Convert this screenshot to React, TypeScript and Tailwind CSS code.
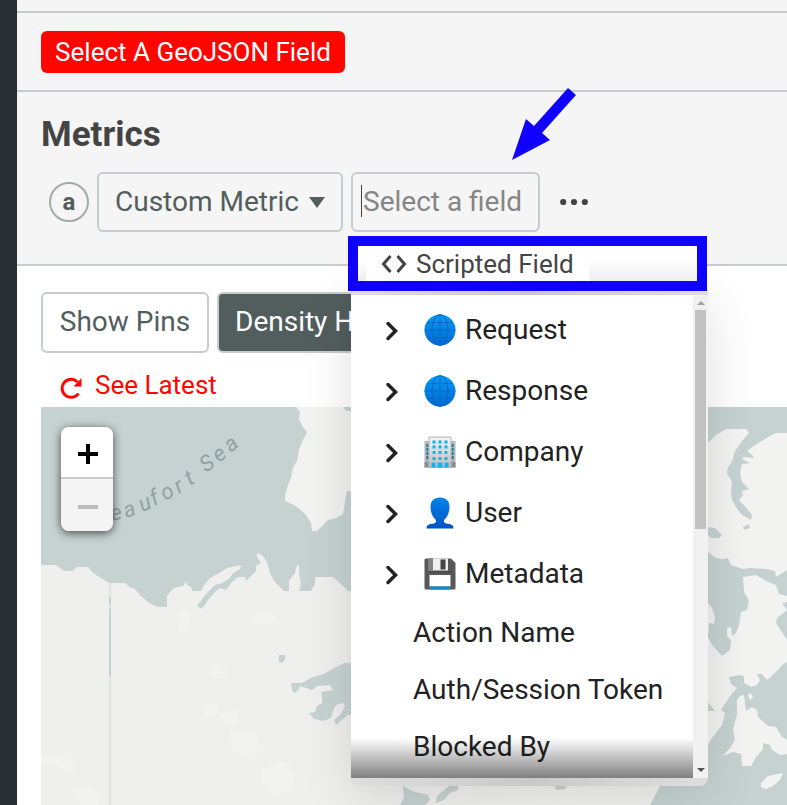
import type { ReactNode } from "react";

function Globe() {
  return (
    <svg viewBox="0 0 32 32" className="size-8 shrink-0" aria-hidden="true">
      <defs>
        <linearGradient id="globe" x1="0" y1="0" x2="0" y2="1">
          <stop offset="0" stopColor="#039df5" />
          <stop offset="1" stopColor="#0068d6" />
        </linearGradient>
      </defs>
      <circle cx="16" cy="16" r="15.5" fill="url(#globe)" />
      <g fill="none" stroke="#0668c0" strokeWidth="1">
        <path d="M16 .5v31M.5 16h31M3.500 8.500h25M3.500 23.500h25" />
        <ellipse cx="16" cy="16" rx="8" ry="15.500" />
      </g>
    </svg>
  );
}

function Building() {
  const rows = [4.5, 9.5, 15, 21];
  return (
    <svg viewBox="0 0 32 32" className="size-8 shrink-0" aria-hidden="true">
      <defs>
        <linearGradient id="tower" x1="0" y1="0" x2="0" y2="1">
          <stop offset="0" stopColor="#f4f4f4" />
          <stop offset="1" stopColor="#bdbdbd" />
        </linearGradient>
      </defs>
      <path d="M.500 5h5v26.500h-5zM26.500 5h5v26.500h-5z" fill="#b5b5b5" />
      <path d="M.500 26h5v5.500h-5zM26.500 26h5v5.500h-5z" fill="#8f8f8f" />
      {[8, 12, 16, 20].map((y) => (
        <path key={y} d={`M2.500 ${y}h2v3h-2zM27.500 ${y}h2v3h-2z`} fill="#087da5" />
      ))}
      <path d="M5 1h22v30.500H5z" fill="url(#tower)" stroke="#b5b5b5" />
      {rows.map((y) => (
        <path key={y} d={`M8.500 ${y}h3v3h-3zM14.500 ${y}h3v3h-3zM20.500 ${y}h3v3h-3z`} fill="#08b5f7" />
      ))}
      <path d="M7.500 26.500h4v5h-4zM13.500 26.500h5v5h-5zM20.500 26.500h4v5h-4z" fill="#08b5f7" />
    </svg>
  );
}

function Person() {
  return (
    <svg viewBox="0 0 32 32" className="size-8 shrink-0" aria-hidden="true">
      <defs>
        <linearGradient id="person" x1="0" y1="0" x2="0" y2="1">
          <stop offset="0" stopColor="#0284ea" />
          <stop offset="1" stopColor="#0052c4" />
        </linearGradient>
      </defs>
      <path
        d="M16 .5c6 0 9.500 3.500 9.500 9 0 6-2 10.500-5.500 13.500v2c1 1.500 3 1.500 5.500 2 3 .7 4 2 4 4.500h-27c0-2.500 1-3.800 4-4.500 2.500-.5 4.500-.5 5.500-2v-2c-3.500-3-5.500-7.500-5.500-13.500 0-5.500 3.500-9 9.500-9z"
        fill="url(#person)"
      />
    </svg>
  );
}

function Floppy() {
  return (
    <svg viewBox="0 0 32 32" className="size-8 shrink-0" aria-hidden="true">
      <path d="M2 .5h25l4.500 4.500v25a1.500 1.500 0 0 1-1.500 1.500H2A1.500 1.500 0 0 1 .5 30V2A1.500 1.500 0 0 1 2 .5z" fill="#585858" />
      <path d="M4 .5h5v13H4z" fill="#828282" />
      <path d="M9 .5h15v12H9z" fill="#eeeeee" />
      <path d="M16.500 1.500h5v10h-5z" fill="#444" />
      <path d="M3.500 14h25" stroke="#3f3f3f" />
      <path d="M5.500 17h21v11.500h-21z" fill="#fff" />
      <path d="M5.500 28.500h21v3h-21z" fill="#0888cf" />
    </svg>
  );
}

function Chevron() {
  return (
    <svg viewBox="0 0 14 20" className="mt-[3px] h-5 w-[14px] shrink-0" fill="none" stroke="#222" strokeWidth="3.500" aria-hidden="true">
      <path d="m3 2.500 7.500 7.500-7.500 7.500" strokeLinecap="round" />
    </svg>
  );
}

const groups: { name: string; icon: ReactNode }[] = [
  { name: "Request", icon: <Globe /> },
  { name: "Response", icon: <Globe /> },
  { name: "Company", icon: <Building /> },
  { name: "User", icon: <Person /> },
  { name: "Metadata", icon: <Floppy /> },
];

const fields = ["Action Name", "Auth/Session Token", "Blocked By"];

function FieldMenu() {
  return (
    <div className="absolute top-full left-0 z-10 mt-1 w-[357px]">
      <div className="relative -ml-[3px] h-[55px] w-[359px] border-[10px] border-[#1000ff] bg-linear-to-b from-white from-40% to-[#eeeeee]">
        <button className="ml-2 flex h-full w-[223px] items-center gap-[9px] bg-white pl-[15px] text-[26px] leading-8 text-[#444]">
          <svg viewBox="0 0 26 20" className="h-5 w-[26px]" fill="none" stroke="#444" strokeWidth="3" aria-hidden="true">
            <path d="m9.500 2-7 8 7 8M16.500 2l7 8-7 8" />
          </svg>
          <span className="whitespace-nowrap">Scripted Field</span>
        </button>
      </div>
      <div className="rounded-b-lg bg-linear-to-r from-[#dedede] via-[#c9c9c9] to-[#dedede] pt-1 pb-2 shadow-[0_10px_50px_rgba(0,0,0,0.13)]">
        <div className="flex h-[483px] bg-white">
          <div className="relative min-w-0 flex-1 overflow-hidden pt-1">
            <ul className="text-[28px] leading-8 text-[#222]">
              {groups.map((group) => (
                <li key={group.name}>
                  <button className="flex h-[61px] w-full items-center pl-[34px]">
                    <Chevron />
                    <span className="ml-[25px] flex items-center gap-[9px]">
                      {group.icon}
                      {group.name}
                    </span>
                  </button>
                </li>
              ))}
              {fields.map((field) => (
                <li key={field}>
                  <button className="flex h-[57px] w-full items-center pl-[62px] whitespace-nowrap">{field}</button>
                </li>
              ))}
            </ul>
            <div className="pointer-events-none absolute inset-x-0 bottom-0 h-10 bg-linear-to-b from-transparent to-black/50" />
          </div>
          <div className="flex w-[15px] flex-col items-center bg-[#f1f1f1] py-[6px]">
            <svg viewBox="0 0 8 4" className="h-1 w-2" aria-hidden="true">
              <path d="M0 4 4 0l4 4z" fill="#a0a0a0" />
            </svg>
            <div className="mt-[5px] h-[219px] w-[11px] bg-[#c1c1c1]" />
            <svg viewBox="0 0 8 4" className="mt-auto h-1 w-2" aria-hidden="true">
              <path d="m0 0 4 4 4-4z" fill="#505050" />
            </svg>
          </div>
        </div>
      </div>
    </div>
  );
}

const mainland =
  "M41 565H56L64 571H72L77 567H88L93 573 101 578 109 583H125L131 588H134L141 596 148 602 157 607H167V596L171 591 174 588 183 586 186 581 187 585 191 587 192 591H201L205 584 210 578 221 572 227 568 241 565 240 569 233 573 230 578 222 583 215 585 209 591 203 598 201 601 197 605 201 609 205 605 207 601 215 592 220 588 226 590 232 582 238 577 245 577 246 581 256 571V566L261 563 257 557V553L262 555 267 562 270 573 274 581 284 591H289V581L295 573 297 565 299 566V574L301 583 299 591H311L315 584V577H333L341 584 348 591H360L700 600 708 603 712 608 715 617 714 624 709 623 708 637 712 645 722 656 730 650 731 640 727 636 727 628 731 627 732 636 736 633 739 625 741 612 747 610 749 600 744 592 743 577 756 575 768 582 776 585 779 594 787 596V602L782 603 787 610 777 618 776 623 787 640V662L783 664 776 672 767 680 762 674H757L760 680 757 685 751 687 744 683V676L740 675 729 677 731 684 737 688 730 696 721 710 725 713 722 725 712 738 708 745 660 786 650 805H41Z";

const northIsland =
  "M296 407 300 412 299 420 303 427 307 432 302 442 299 450 297 461 293 468 291 478 287 488 285 497V501L292 504 300 509 306 515 311 523 312 531H317L323 525 328 520 336 518 343 514 345 502 347 491H360V411H346L343 407Z";

const eastIsland =
  "M708 443 716 435 726 429H746L749 433 742 441 735 451 732 462 728 467 727 473 732 482 731 490 732 500 736 507 741 514 751 520 752 515 749 511 739 500 743 495 742 491 749 489 742 482 740 473 742 464 750 463 742 459 744 457 754 458 752 455 747 451 752 447 760 442 770 436 776 433H787V570L776 577 775 571 767 569 750 568 743 569 731 565 728 558 722 559 716 558 708 552Z";

const southPeninsula =
  "M740 696 744 695 746 711 752 707 757 710 758 717 768 726 776 727 782 737 787 740V754L780 755 772 750 770 745 763 743V749L756 757 751 766H742L741 754 733 752 723 756 730 748 735 740 733 729 737 715V700Z M761 783 768 776 783 773 780 780 773 786 766 789 761 787Z M748 695 751 693 753 698 750 700Z";

const lakes =
  "M279 655H285V660L282 663 279 662Z M291 683H302L313 677 324 674 334 668 344 663H360V715H348L342 720 336 725 334 720 341 714 345 706 343 703 336 705 333 711 331 718 323 721 314 719 309 713 315 712 317 706 322 703V697L321 692 333 690 330 685 317 686 312 690 300 686 299 689 295 693 292 690Z M400 805 404 798 403 786 412 791 428 795 430 800 425 805Z M437 796 449 786H458V790L450 793 444 800 436 803Z M555 786H567L565 789 556 790Z M708 527 715 528 722 535 719 538H711L708 535Z M743 527 749 524 750 528 744 530Z M708 702 715 711H708Z M723 567 728 566 729 569H723Z M757 685 762 688 767 696 765 700 759 693 754 688Z";

const relief =
  "M180 612 188 615 190 622 184 633H179Z M208 667 218 664 227 671 222 679 209 677Z M253 615 270 612 279 620 267 625 250 622Z M231 731H255L258 748 252 754 232 752Z M204 706 214 703 219 714 236 710 237 720 228 726 220 715 207 718Z M41 752 50 758 68 757 75 769 67 772 55 765 41 763Z M71 787 90 788 100 797 98 805H81Z M262 770 284 760 295 773 290 790 274 794 263 785Z";

const labelX = "93 112 126 142 154 165 179 190 198 206 219 231";
const labelY = "526 521 518 512 506 501 494 486 478 473 463 453";
const labelTurn = "-10 -12 -18 -22 -25 -28 -30 -31 -34 -36 -38 -40";

function Map() {
  return (
    <div className="relative ml-6 flex-1 bg-[#c6d2d2]">
      <svg viewBox="41 407 746 398" className="block w-full" role="img" aria-label="Map">
        <defs>
          <linearGradient id="land" gradientUnits="userSpaceOnUse" x1="300" y1="0" x2="740" y2="0">
            <stop offset="0" stopColor="#efefee" />
            <stop offset="1" stopColor="#f3f3f2" />
          </linearGradient>
        </defs>
        <path d={mainland} fill="url(#land)" />
        <path d={northIsland} fill="#f2f2f0" />
        <path d={eastIsland} fill="#f3f3f2" />
        <path d={southPeninsula} fill="#f3f3f2" />
        <path d={relief} fill="#f2f2f0" />
        <path d={lakes} fill="#c6d2d2" />
        <path d="M110 583V805" stroke="#e2e4e3" strokeWidth="2" />
        <path d="M110 609V676M110 597v8" stroke="#c6d2d2" strokeWidth="2" />
        <text x={labelX} y={labelY} rotate={labelTurn} fill="#8fa1a0" className="text-[22px] italic">
          Beaufort Sea
        </text>
      </svg>
      <div className="absolute top-5 left-5 flex w-[52px] flex-col overflow-hidden rounded-lg shadow-[0_2px_10px_rgba(0,0,0,0.65)]">
        <button aria-label="Zoom in" className="flex h-[52px] items-center justify-center border-b-2 border-[#ccc] bg-white pt-1 pl-px">
          <svg viewBox="0 0 20 20" className="size-5" stroke="#000" strokeWidth="4" aria-hidden="true">
            <path d="M0 10h20M10 0v20" />
          </svg>
        </button>
        <button aria-label="Zoom out" className="flex h-[52px] items-center justify-center bg-[#f4f4f4] pt-1 pl-px">
          <svg viewBox="0 0 20 20" className="size-5" stroke="#bbb" strokeWidth="4" aria-hidden="true">
            <path d="M0 10h20" />
          </svg>
        </button>
      </div>
    </div>
  );
}

export default function App() {
  return (
    <div className="flex min-h-screen overflow-hidden bg-white font-[Roboto,sans-serif]">
      <aside className="w-[17px] shrink-0 bg-[#272e34]" />
      <main className="flex min-w-0 flex-1 flex-col">
        <div className="h-[13px] border-b-2 border-[#c5cccd] bg-[#f5f5f5]" />
        <section className="border-b-2 border-[#c5cccd] bg-[#f5f5f5] px-6 pt-[18px] pb-[17px]">
          <button className="block h-[42px] w-[304px] rounded-md bg-[#ff0500] text-[26px] leading-[42px] whitespace-nowrap text-white">
            Select A GeoJSON Field
          </button>
        </section>
        <section className="border-b-2 border-[#c5cccd] bg-[#f5f5f5] px-6 pt-[23px] pb-8">
          <h2 className="text-[35px] leading-10 font-bold text-[#444]">Metrics</h2>
          <div className="mt-[17px] flex items-center gap-2 pl-2">
            <span className="flex size-10 shrink-0 items-center justify-center rounded-full border-2 border-[#a0abaa] pb-px text-2xl font-bold text-[#525e5d]">
              a
            </span>
            <button className="flex h-[60px] w-[246px] shrink-0 items-center justify-between rounded-md border-2 border-[#c5cccd] px-4 text-[28px] whitespace-nowrap text-[#525e5d]">
              Custom Metric
              <svg viewBox="0 0 16 11" className="h-[11px] w-4" aria-hidden="true">
                <path d="M0 0h16L8 11z" fill="#525e5d" />
              </svg>
            </button>
            <div className="relative w-[189px] shrink-0">
              <input
                aria-label="Field"
                placeholder="Select a field"
                className="block h-[60px] w-full rounded-md border-2 border-[#c5cccd] bg-transparent pb-[2px] pl-[10px] text-[28px] text-[#525e5d] outline-none placeholder:text-[#858585]"
              />
              <span className="absolute top-[13px] left-[10px] h-8 w-px bg-[#444]" />
              <svg viewBox="0 0 64 72" className="pointer-events-none absolute -top-[84px] left-[161px] h-[72px] w-16" aria-hidden="true">
                <path d="M0 72 14 31l8 7L56 0l8 7-34 38 8 7z" fill="#1000ff" />
              </svg>
              <FieldMenu />
            </div>
            <button aria-label="More options" className="ml-[12px] flex h-10 w-7 items-center">
              <svg viewBox="0 0 28 8" className="h-2 w-7" fill="#444" aria-hidden="true">
                <circle cx="3.200" cy="4" r="3.100" />
                <circle cx="14" cy="4" r="3.100" />
                <circle cx="24.800" cy="4" r="3.100" />
              </svg>
            </button>
          </div>
        </section>
        <div className="flex gap-2 px-6 pt-[26px] text-[28px] whitespace-nowrap">
          <button className="h-[61px] w-[168px] shrink-0 rounded-md border-2 border-[#c5cccd] bg-white pb-[2px] text-[#525e5d]">Show Pins</button>
          <button className="h-[61px] shrink-0 rounded-md border-2 border-[#c5cccd] bg-[#525e5d] px-4 pb-[2px] text-white">Density Heatmap</button>
        </div>
        <button className="mt-[11px] ml-[43px] flex h-[43px] items-center gap-[13px] self-start text-[26px] whitespace-nowrap text-[#ff0500]">
          <svg viewBox="0 0 22 22" className="mt-1 size-[22px]" fill="none" stroke="currentColor" strokeWidth="3" aria-hidden="true">
            <path d="M18.500 16.500A9 9 0 1 1 17.500 5" />
            <path d="M21.500 1v8.500h-8z" fill="currentColor" stroke="none" />
          </svg>
          See Latest
        </button>
        <Map />
      </main>
    </div>
  );
}
